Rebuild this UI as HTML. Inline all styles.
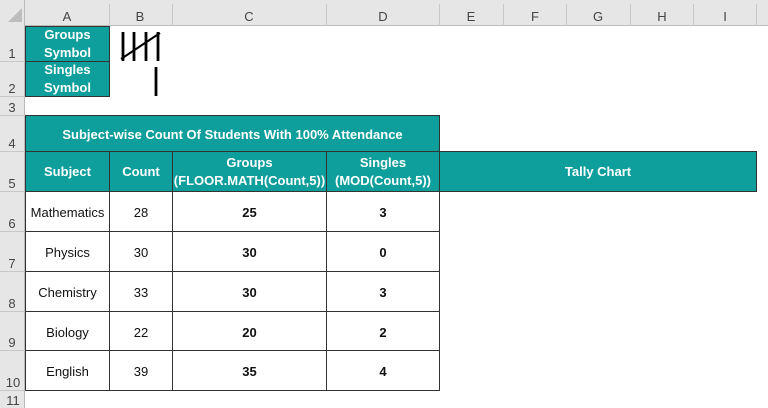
<!DOCTYPE html>
<html><head><style>
body{margin:0;width:768px;height:408px;overflow:hidden;background:#fff;font-family:"Liberation Sans",sans-serif;position:relative}
div{position:absolute;box-sizing:border-box}
.h{background:#e6e6e6;color:#444;font-size:12px;text-align:center}
.t{background:#0e9e9c;color:#fff;font-weight:bold;font-size:13px;display:flex;align-items:center;justify-content:center;text-align:center;line-height:18px;border:1px solid #333}
.c{font-size:13px;color:#111;display:flex;align-items:center;justify-content:center;border:1px solid #333;padding-top:2px}
.b{font-weight:bold}
</style></head><body>
<div class="h" style="left:0;top:0;width:768px;height:26px;border-bottom:1px solid #bbb"></div>
<div class="h" style="left:0;top:0;width:25px;height:408px;border-right:1px solid #bbb"></div>
<svg style="position:absolute;left:0;top:0" width="768" height="408">
<polygon points="22,8 22,22 8,22" fill="#bdbdbd"/>
<g stroke="#c8c8c8" stroke-width="1">
<line x1="109.5" y1="4" x2="109.5" y2="26"/><line x1="172.5" y1="4" x2="172.5" y2="26"/><line x1="326.5" y1="4" x2="326.5" y2="26"/><line x1="439.5" y1="4" x2="439.5" y2="26"/><line x1="503.5" y1="4" x2="503.5" y2="26"/><line x1="566.5" y1="4" x2="566.5" y2="26"/><line x1="630.5" y1="4" x2="630.5" y2="26"/><line x1="693.5" y1="4" x2="693.5" y2="26"/><line x1="756.5" y1="4" x2="756.5" y2="26"/>
<line x1="0" y1="61.5" x2="25" y2="61.5"/><line x1="0" y1="96.5" x2="25" y2="96.5"/><line x1="0" y1="115.5" x2="25" y2="115.5"/><line x1="0" y1="151.5" x2="25" y2="151.5"/><line x1="0" y1="191.5" x2="25" y2="191.5"/><line x1="0" y1="231.5" x2="25" y2="231.5"/><line x1="0" y1="271.5" x2="25" y2="271.5"/><line x1="0" y1="311.5" x2="25" y2="311.5"/><line x1="0" y1="350.5" x2="25" y2="350.5"/><line x1="0" y1="390.5" x2="25" y2="390.5"/>
</g>
<g fill="#444" font-size="13" font-family="Liberation Sans" text-anchor="middle">
<text x="67" y="21">A</text><text x="140" y="21">B</text><text x="249" y="21">C</text><text x="383" y="21">D</text><text x="471" y="21">E</text><text x="535" y="21">F</text><text x="598" y="21">G</text><text x="662" y="21">H</text><text x="725" y="21">I</text>
<text x="12" y="58">1</text><text x="12" y="93">2</text><text x="12" y="112">3</text><text x="12" y="148">4</text><text x="12" y="188">5</text><text x="12" y="228">6</text><text x="12" y="268">7</text><text x="12" y="308">8</text><text x="12" y="347">9</text><text x="13" y="387">10</text><text x="13" y="405">11</text>
</g>
<g stroke="#000" stroke-width="2.8">
<line x1="123" y1="32" x2="123" y2="61"/><line x1="134" y1="32" x2="134" y2="61"/><line x1="146" y1="32" x2="146" y2="61"/><line x1="158" y1="32" x2="158" y2="61"/>
<line x1="121" y1="59" x2="160" y2="33" stroke-width="2"/>
<line x1="156" y1="67" x2="156" y2="96"/>
</g>
</svg>
<div class="t" style="left:25px;top:26px;width:85px;height:36px;flex-direction:column">Groups<br>Symbol</div>
<div class="t" style="left:25px;top:61px;width:85px;height:36px;flex-direction:column">Singles<br>Symbol</div>
<div class="t" style="left:25px;top:115px;width:415px;height:37px;padding-top:2px">Subject-wise Count Of Students With 100% Attendance</div>
<div class="t" style="left:25px;top:151px;width:85px;height:41px">Subject</div>
<div class="t" style="left:109px;top:151px;width:64px;height:41px">Count</div>
<div class="t" style="left:172px;top:151px;width:155px;height:41px">Groups<br>(FLOOR.MATH(Count,5))</div>
<div class="t" style="left:326px;top:151px;width:114px;height:41px">Singles<br>(MOD(Count,5))</div>
<div class="t" style="left:439px;top:151px;width:318px;height:41px">Tally Chart</div>

<div class="c" style="left:25px;top:191px;width:85px;height:41px">Mathematics</div>
<div class="c" style="left:109px;top:191px;width:64px;height:41px">28</div>
<div class="c b" style="left:172px;top:191px;width:155px;height:41px">25</div>
<div class="c b" style="left:326px;top:191px;width:114px;height:41px">3</div>

<div class="c" style="left:25px;top:231px;width:85px;height:41px">Physics</div>
<div class="c" style="left:109px;top:231px;width:64px;height:41px">30</div>
<div class="c b" style="left:172px;top:231px;width:155px;height:41px">30</div>
<div class="c b" style="left:326px;top:231px;width:114px;height:41px">0</div>

<div class="c" style="left:25px;top:271px;width:85px;height:41px">Chemistry</div>
<div class="c" style="left:109px;top:271px;width:64px;height:41px">33</div>
<div class="c b" style="left:172px;top:271px;width:155px;height:41px">30</div>
<div class="c b" style="left:326px;top:271px;width:114px;height:41px">3</div>

<div class="c" style="left:25px;top:311px;width:85px;height:40px">Biology</div>
<div class="c" style="left:109px;top:311px;width:64px;height:40px">22</div>
<div class="c b" style="left:172px;top:311px;width:155px;height:40px">20</div>
<div class="c b" style="left:326px;top:311px;width:114px;height:40px">2</div>

<div class="c" style="left:25px;top:350px;width:85px;height:41px">English</div>
<div class="c" style="left:109px;top:350px;width:64px;height:41px">39</div>
<div class="c b" style="left:172px;top:350px;width:155px;height:41px">35</div>
<div class="c b" style="left:326px;top:350px;width:114px;height:41px">4</div>
</body></html>
